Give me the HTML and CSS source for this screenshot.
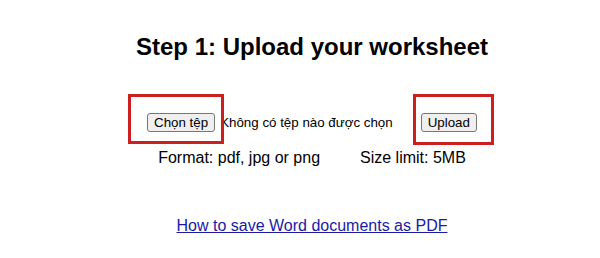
FILE: index.html
```html
<!DOCTYPE html>
<html lang="vi">
<head>
<meta charset="utf-8">
<link rel="stylesheet" href="styles.css">
</head>
<body>
<div class="page">
  <h1 class="title">Step 1: Upload your worksheet</h1>
  <div class="upload-row">
    <div class="file-picker">
      <button class="btn" type="button">Chọn tệp</button>
      <span class="file-status">Không có tệp nào được chọn</span>
      <span class="mark mark-file"></span>
    </div>
    <div class="submit-wrap">
      <button class="btn" type="button">Upload</button>
      <span class="mark mark-upload"></span>
    </div>
  </div>
  <div class="info-row">
    <span>Format: pdf, jpg or png</span>
    <span>Size limit: 5MB</span>
  </div>
  <div class="link-row">
    <a href="#" class="help-link">How to save Word documents as PDF</a>
  </div>
</div>
</body>
</html>
```
FILE: styles.css
```css
html, body {
  margin: 0;
  padding: 0;
  background: #ffffff;
}
body {
  width: 600px;
  height: 258px;
  overflow: hidden;
  font-family: "Liberation Sans", Arial, sans-serif;
  color: #000;
}
.page {
  padding-left: 24px;
  display: flex;
  flex-direction: column;
  align-items: center;
}
.title {
  margin: 0;
  padding-top: 32px;
  font-size: 24px;
  font-weight: bold;
  line-height: 30px;
}
.upload-row {
  display: flex;
  align-items: center;
  margin-top: 50px;
  height: 20px;
}
.file-picker {
  position: relative;
  display: flex;
  align-items: center;
}
.file-status {
  font-size: 13.33px;
  margin-left: 5px;
}
.submit-wrap {
  position: relative;
  margin-left: 28px;
}
.btn {
  font-family: "Liberation Sans", Arial, sans-serif;
  font-size: 13.33px;
  color: #000;
  background: #efefef;
  border: 1px solid #767676;
  border-radius: 3px;
  padding: 1px 6px;
  height: 19px;
  line-height: 15px;
  margin: 0;
}
.mark {
  position: absolute;
  border: 3px solid #cc1f1f;
  box-sizing: border-box;
  pointer-events: none;
}
.mark-file {
  left: -19px;
  top: -19px;
  width: 96px;
  height: 50px;
}
.mark-upload {
  left: -8px;
  top: -19px;
  width: 81px;
  height: 51px;
}
.info-row {
  display: flex;
  gap: 40px;
  margin-top: 17px;
  font-size: 16px;
  line-height: 18px;
}
.link-row {
  margin-top: 50px;
  font-size: 16px;
  line-height: 18px;
}
.help-link {
  color: #1a1aa6;
  text-decoration: underline;
}
```
